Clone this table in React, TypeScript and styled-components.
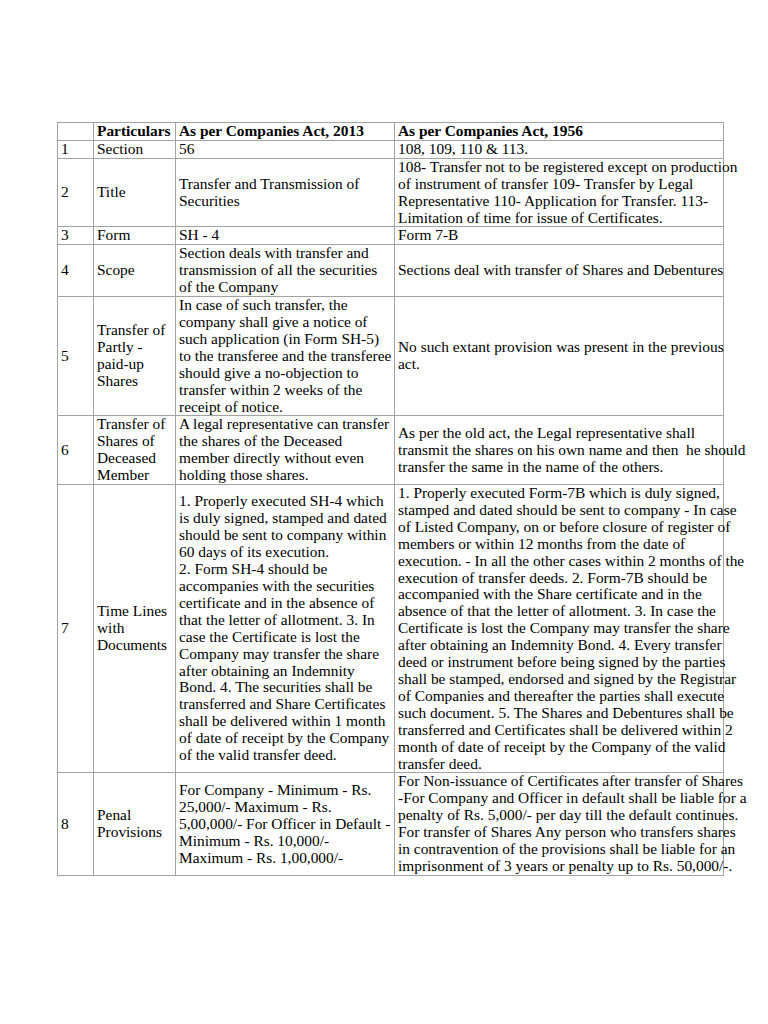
import React from 'react';
import styled, { createGlobalStyle } from 'styled-components';

const GlobalStyle = createGlobalStyle`
  html, body {
    margin: 0;
    padding: 0;
    background: #ffffff;
  }
  body {
    font-family: "Liberation Serif", "Times New Roman", serif;
    color: #000;
  }
`;

const Page = styled.div`
  width: 768px;
  min-height: 1024px;
  padding: 122px 0 0 57px;
  box-sizing: border-box;
`;

const Table = styled.table`
  width: 666px;
  table-layout: fixed;
  border-collapse: collapse;
  font-size: 15.4px;
  line-height: 16.9px;
`;

const Cell = styled.td<{ $bold?: boolean }>`
  border: 1px solid #a3a3a3;
  padding: 0 2px 0 3px;
  vertical-align: middle;
  text-align: left;
  font-weight: ${p => (p.$bold ? 700 : 400)};
  white-space: nowrap;
  overflow: visible;
`;

const Line = styled.span`
  display: block;
`;

type Row = [string, string[], string[], string[]];

const header: Row = ['', ['Particulars'], ['As per Companies Act, 2013'], ['As per Companies Act, 1956']];

const rows: Row[] = [
  ['1', ['Section'], ['56'], ['108, 109, 110 & 113.']],
  [
    '2',
    ['Title'],
    ['Transfer and Transmission of', 'Securities'],
    [
      '108- Transfer not to be registered except on production',
      'of instrument of transfer 109- Transfer by Legal',
      'Representative 110- Application for Transfer. 113-',
      'Limitation of time for issue of Certificates.',
    ],
  ],
  ['3', ['Form'], ['SH - 4'], ['Form 7-B']],
  [
    '4',
    ['Scope'],
    ['Section deals with transfer and', 'transmission of all the securities', 'of the Company'],
    ['Sections deal with transfer of Shares and Debentures'],
  ],
  [
    '5',
    ['Transfer of', 'Partly -', 'paid-up', 'Shares'],
    [
      'In case of such transfer, the',
      'company shall give a notice of',
      'such application (in Form SH-5)',
      'to the transferee and the transferee',
      'should give a no-objection to',
      'transfer within 2 weeks of the',
      'receipt of notice.',
    ],
    ['No such extant provision was present in the previous', 'act.'],
  ],
  [
    '6',
    ['Transfer of', 'Shares of', 'Deceased', 'Member'],
    [
      'A legal representative can transfer',
      'the shares of the Deceased',
      'member directly without even',
      'holding those shares.',
    ],
    [
      'As per the old act, the Legal representative shall',
      'transmit the shares on his own name and then\u00a0 he should',
      'transfer the same in the name of the others.',
    ],
  ],
  [
    '7',
    ['Time Lines', 'with', 'Documents'],
    [
      '1. Properly executed SH-4 which',
      'is duly signed, stamped and dated',
      'should be sent to company within',
      '60 days of its execution.',
      '2. Form SH-4 should be',
      'accompanies with the securities',
      'certificate and in the absence of',
      'that the letter of allotment. 3. In',
      'case the Certificate is lost the',
      'Company may transfer the share',
      'after obtaining an Indemnity',
      'Bond. 4. The securities shall be',
      'transferred and Share Certificates',
      'shall be delivered within 1 month',
      'of date of receipt by the Company',
      'of the valid transfer deed.',
    ],
    [
      '1. Properly executed Form-7B which is duly signed,',
      'stamped and dated should be sent to company - In case',
      'of Listed Company, on or before closure of register of',
      'members or within 12 months from the date of',
      'execution. - In all the other cases within 2 months of the',
      'execution of transfer deeds. 2. Form-7B should be',
      'accompanied with the Share certificate and in the',
      'absence of that the letter of allotment. 3. In case the',
      'Certificate is lost the Company may transfer the share',
      'after obtaining an Indemnity Bond. 4. Every transfer',
      'deed or instrument before being signed by the parties',
      'shall be stamped, endorsed and signed by the Registrar',
      'of Companies and thereafter the parties shall execute',
      'such document. 5. The Shares and Debentures shall be',
      'transferred and Certificates shall be delivered within 2',
      'month of date of receipt by the Company of the valid',
      'transfer deed.',
    ],
  ],
  [
    '8',
    ['Penal', 'Provisions'],
    [
      'For Company - Minimum - Rs.',
      '25,000/- Maximum - Rs.',
      '5,00,000/- For Officer in Default -',
      'Minimum - Rs. 10,000/-',
      'Maximum - Rs. 1,00,000/-',
    ],
    [
      'For Non-issuance of Certificates after transfer of Shares',
      '-For Company and Officer in default shall be liable for a',
      'penalty of Rs. 5,000/- per day till the default continues.',
      'For transfer of Shares Any person who transfers shares',
      'in contravention of the provisions shall be liable for an',
      'imprisonment of 3 years or penalty up to Rs. 50,000/-.',
    ],
  ],
];

const Lines: React.FC<{ lines: string[] }> = ({ lines }) => (
  <>
    {lines.map((l, i) => (
      <Line key={i}>{l || '\u00a0'}</Line>
    ))}
  </>
);

const App: React.FC = () => {
  return (
    <>
      <GlobalStyle />
      <Page>
        <Table>
          <colgroup>
            <col style={{ width: 36 }} />
            <col style={{ width: 82 }} />
            <col style={{ width: 219 }} />
            <col style={{ width: 329 }} />
          </colgroup>
          <thead>
            <tr>
              <Cell $bold>{header[0] || '\u00a0'}</Cell>
              <Cell $bold><Lines lines={header[1]} /></Cell>
              <Cell $bold><Lines lines={header[2]} /></Cell>
              <Cell $bold><Lines lines={header[3]} /></Cell>
            </tr>
          </thead>
          <tbody>
            {rows.map(r => (
              <tr key={r[0]}>
                <Cell>{r[0]}</Cell>
                <Cell><Lines lines={r[1]} /></Cell>
                <Cell><Lines lines={r[2]} /></Cell>
                <Cell><Lines lines={r[3]} /></Cell>
              </tr>
            ))}
          </tbody>
        </Table>
      </Page>
    </>
  );
};

export default App;
